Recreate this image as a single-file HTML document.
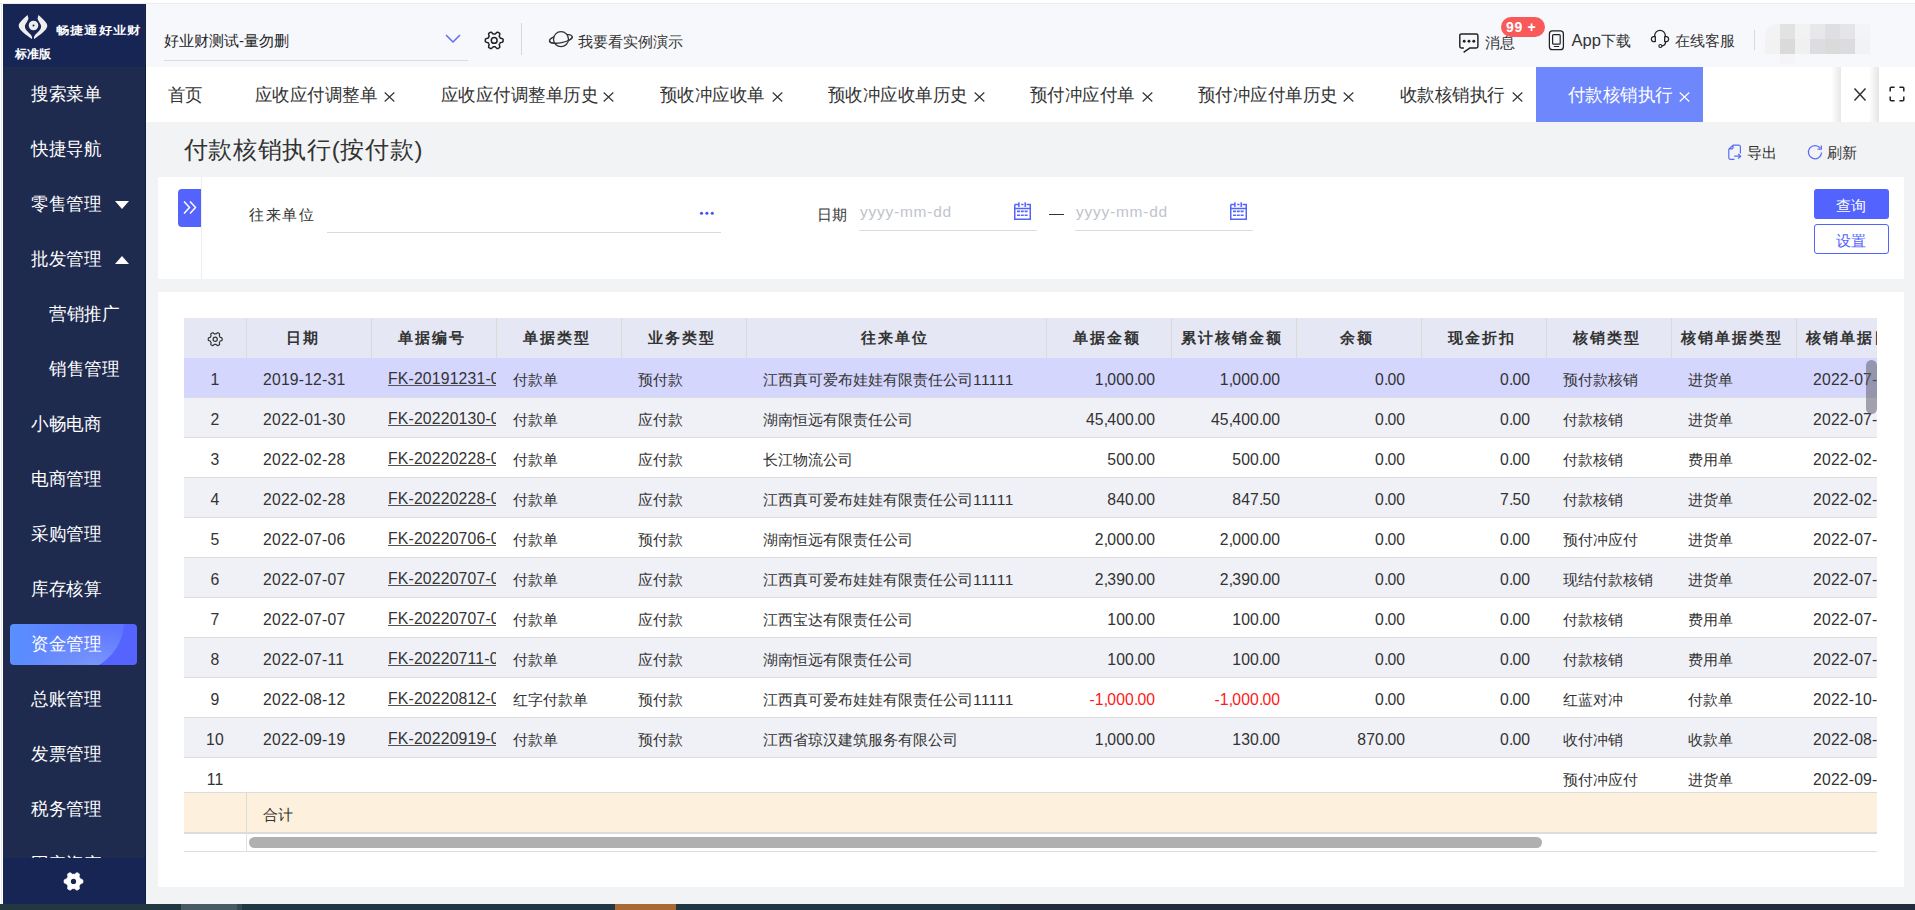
<!DOCTYPE html><html><head><meta charset="utf-8"><style>
*{margin:0;padding:0;box-sizing:border-box}
body{width:1915px;height:910px;position:relative;overflow:hidden;background:#fff;font-family:"Liberation Sans", sans-serif}
.t{position:absolute;white-space:nowrap}
svg{position:absolute;overflow:visible}
</style></head><body>
<div style="position:absolute;left:0px;top:3px;width:1915px;height:1px;background:#ececec"></div>
<div style="position:absolute;left:1px;top:3px;width:1px;height:901px;background:#e9e9e9"></div>
<div style="position:absolute;left:146px;top:4px;width:1769px;height:63px;background:#f7f8fc"></div>
<div class="t" style="left:164px;top:33px;font-size:15px;line-height:15px;color:#222;">好业财测试-量勿删</div>
<div style="position:absolute;left:164px;top:60px;width:304px;height:1px;background:#d9dbe0"></div>
<svg style="left:445px;top:34px" width="16" height="9" viewBox="0 0 16 9"><path d="M1 1 L8 8 L15 1" fill="none" stroke="#5b6cf5" stroke-width="1.5"/></svg>
<svg style="left:474px;top:20px" width="40" height="40" viewBox="0 0 40 40"><path d="M29.10 20.40 L29.09 20.79 L29.07 21.18 L29.02 21.56 L28.78 21.91 L28.21 22.17 L27.59 22.38 L26.97 22.54 L26.39 22.65 L26.11 22.85 L26.00 23.10 L25.88 23.36 L25.74 23.60 L25.60 23.84 L25.44 24.07 L25.28 24.30 L25.25 24.63 L25.43 25.20 L25.61 25.81 L25.74 26.45 L25.80 27.07 L25.62 27.46 L25.30 27.69 L24.98 27.91 L24.65 28.11 L24.31 28.29 L23.96 28.47 L23.61 28.62 L23.18 28.59 L22.67 28.22 L22.18 27.79 L21.74 27.33 L21.34 26.89 L21.04 26.75 L20.76 26.78 L20.48 26.79 L20.20 26.80 L19.92 26.79 L19.64 26.78 L19.36 26.75 L19.06 26.89 L18.66 27.33 L18.22 27.79 L17.73 28.22 L17.22 28.59 L16.79 28.62 L16.44 28.47 L16.09 28.29 L15.75 28.11 L15.42 27.91 L15.10 27.69 L14.78 27.46 L14.60 27.07 L14.66 26.45 L14.79 25.81 L14.97 25.20 L15.15 24.63 L15.12 24.30 L14.96 24.07 L14.80 23.84 L14.66 23.60 L14.52 23.36 L14.40 23.10 L14.29 22.85 L14.01 22.65 L13.43 22.54 L12.81 22.38 L12.19 22.17 L11.62 21.91 L11.38 21.56 L11.33 21.18 L11.31 20.79 L11.30 20.40 L11.31 20.01 L11.33 19.62 L11.38 19.24 L11.62 18.89 L12.19 18.63 L12.81 18.42 L13.43 18.26 L14.01 18.15 L14.29 17.95 L14.40 17.70 L14.52 17.44 L14.66 17.20 L14.80 16.96 L14.96 16.73 L15.12 16.50 L15.15 16.17 L14.97 15.60 L14.79 14.99 L14.66 14.35 L14.60 13.73 L14.78 13.34 L15.10 13.11 L15.42 12.89 L15.75 12.69 L16.09 12.51 L16.44 12.33 L16.79 12.18 L17.22 12.21 L17.73 12.58 L18.22 13.01 L18.66 13.47 L19.06 13.91 L19.36 14.05 L19.64 14.02 L19.92 14.01 L20.20 14.00 L20.48 14.01 L20.76 14.02 L21.04 14.05 L21.34 13.91 L21.74 13.47 L22.18 13.01 L22.67 12.58 L23.18 12.21 L23.61 12.18 L23.96 12.33 L24.31 12.51 L24.65 12.69 L24.98 12.89 L25.30 13.11 L25.62 13.34 L25.80 13.73 L25.74 14.35 L25.61 14.99 L25.43 15.60 L25.25 16.17 L25.28 16.50 L25.44 16.73 L25.60 16.96 L25.74 17.20 L25.88 17.44 L26.00 17.70 L26.11 17.95 L26.39 18.15 L26.97 18.26 L27.59 18.42 L28.21 18.63 L28.78 18.89 L29.02 19.24 L29.07 19.62 L29.09 20.01Z" fill="none" stroke="#222" stroke-width="1.5" stroke-linejoin="round"/><circle cx="20.2" cy="20.4" r="2.9" fill="none" stroke="#222" stroke-width="1.5"/></svg>
<div style="position:absolute;left:521px;top:23px;width:1px;height:32px;background:#d6d8de"></div>
<svg style="left:544px;top:26px" width="34" height="26" viewBox="0 0 34 26"><ellipse cx="16.9" cy="12.8" rx="11.6" ry="3.9" transform="rotate(-11 16.9 12.8)" fill="none" stroke="#333" stroke-width="1.3"/><circle cx="17" cy="13.2" r="7.5" fill="#f7f8fc" stroke="#333" stroke-width="1.3"/><path d="M5.51 15.01 A11.6 3.9 -11 0 0 28.29 10.59" fill="none" stroke="#333" stroke-width="1.3"/></svg>
<div class="t" style="left:578px;top:33.5px;font-size:15px;line-height:15px;color:#333;">我要看实例演示</div>
<svg style="left:1458px;top:32px" width="22" height="22" viewBox="0 0 22 22"><path d="M5.9 15.9H3.4a1.6 1.6 0 0 1-1.6-1.6V3.5a1.6 1.6 0 0 1 1.6-1.6h14.9a1.6 1.6 0 0 1 1.6 1.6v10.8a1.6 1.6 0 0 1-1.6 1.6H12L5.6 20.3" fill="none" stroke="#222" stroke-width="1.45" stroke-linejoin="round"/><circle cx="6.2" cy="9.3" r="1.45" fill="#222"/><circle cx="11" cy="9.3" r="1.45" fill="#222"/><circle cx="15.8" cy="9.3" r="1.45" fill="#222"/></svg>
<div class="t" style="left:1485px;top:35px;font-size:15px;line-height:15px;color:#333;">消息</div>
<div style="position:absolute;left:1501px;top:17px;width:44px;height:20px;background:#f85a5a;border-radius:10px"></div>
<div class="t" style="left:1506px;top:19px;font-size:14px;line-height:17px;color:#fff;font-weight:bold;letter-spacing:0.6px">99</div>
<div class="t" style="left:1527.5px;top:19px;font-size:14px;line-height:17px;color:#fff;font-weight:bold">+</div>
<svg style="left:1548px;top:30px" width="17" height="21" viewBox="0 0 17 21"><rect x="1.4" y="0.9" width="14" height="18.8" rx="3" fill="none" stroke="#222" stroke-width="1.25"/><rect x="4.6" y="4.6" width="7.6" height="9.6" rx="1" fill="none" stroke="#222" stroke-width="1.2"/><path d="M6.3 16.5h4.4" stroke="#222" stroke-width="1.2" stroke-linecap="round"/></svg>
<div class="t" style="left:1571.5px;top:32.5px;font-size:15px;line-height:15px;color:#333;"><span style="font-size:16.5px">App</span>下载</div>
<svg style="left:1646px;top:26px" width="28" height="26" viewBox="0 0 28 26"><path d="M8.7 10.6V9.6A5.3 5.3 0 0 1 19.3 9.6V10.6" fill="none" stroke="#222" stroke-width="1.3"/><path d="M9.3 10.7H7.4A2 2.4 0 0 0 5.4 13.1A2 2.4 0 0 0 7.4 15.6H9.3Z" fill="none" stroke="#222" stroke-width="1.3" stroke-linejoin="round"/><path d="M18.7 10.7H20.6A2 2.4 0 0 1 22.6 13.1A2 2.4 0 0 1 20.6 15.6H18.7Z" fill="none" stroke="#222" stroke-width="1.3" stroke-linejoin="round"/><path d="M19.6 15.8Q19.4 19.6 15.9 20" fill="none" stroke="#222" stroke-width="1.3"/><circle cx="14.4" cy="20" r="1.5" fill="none" stroke="#222" stroke-width="1.2"/></svg>
<div class="t" style="left:1675px;top:32.5px;font-size:15px;line-height:15px;color:#333;">在线客服</div>
<div style="position:absolute;left:1754px;top:30px;width:1px;height:20px;background:#d6d8de"></div>
<div style="position:absolute;left:1765px;top:24px;width:15px;height:15px;background:#f3f3f5;border-top-left-radius:12px"></div>
<div style="position:absolute;left:1780px;top:24px;width:15px;height:15px;background:#e2e2e2"></div>
<div style="position:absolute;left:1795px;top:24px;width:15px;height:15px;background:#f2f2f3"></div>
<div style="position:absolute;left:1810px;top:24px;width:15px;height:15px;background:#e8e8ea"></div>
<div style="position:absolute;left:1825px;top:24px;width:15px;height:15px;background:#dfdee2"></div>
<div style="position:absolute;left:1840px;top:24px;width:15px;height:15px;background:#e5e5e8"></div>
<div style="position:absolute;left:1855px;top:24px;width:15px;height:15px;background:#f3f4f7"></div>
<div style="position:absolute;left:1765px;top:39px;width:15px;height:15px;background:#f2f2f3"></div>
<div style="position:absolute;left:1780px;top:39px;width:15px;height:15px;background:#dadada"></div>
<div style="position:absolute;left:1795px;top:39px;width:15px;height:15px;background:#f0f0f1"></div>
<div style="position:absolute;left:1810px;top:39px;width:15px;height:15px;background:#dddce0"></div>
<div style="position:absolute;left:1825px;top:39px;width:15px;height:15px;background:#dadada"></div>
<div style="position:absolute;left:1840px;top:39px;width:15px;height:15px;background:#dcdce0"></div>
<div style="position:absolute;left:1855px;top:39px;width:15px;height:15px;background:#f1f2f6"></div>
<div style="position:absolute;left:1780px;top:54px;width:15px;height:10px;background:#f5f5f7"></div>
<div style="position:absolute;left:146px;top:67px;width:1769px;height:55px;background:#fff"></div>
<div class="t" style="left:167.5px;top:86px;font-size:18px;line-height:18px;color:#333;transform:scaleX(0.972);transform-origin:0 0">首页</div>
<div class="t" style="left:254.5px;top:86px;font-size:18px;line-height:18px;color:#333;transform:scaleX(0.972);transform-origin:0 0">应收应付调整单</div>
<svg style="left:384px;top:92px" width="11" height="10" viewBox="0 0 11 10"><path d="M0.7 0.5L10.3 9.5M10.3 0.5L0.7 9.5" stroke="#333" stroke-width="1.15"/></svg>
<div class="t" style="left:440.5px;top:86px;font-size:18px;line-height:18px;color:#333;transform:scaleX(0.972);transform-origin:0 0">应收应付调整单历史</div>
<svg style="left:603px;top:92px" width="11" height="10" viewBox="0 0 11 10"><path d="M0.7 0.5L10.3 9.5M10.3 0.5L0.7 9.5" stroke="#333" stroke-width="1.15"/></svg>
<div class="t" style="left:659.5px;top:86px;font-size:18px;line-height:18px;color:#333;transform:scaleX(0.972);transform-origin:0 0">预收冲应收单</div>
<svg style="left:771.6px;top:92px" width="11" height="10" viewBox="0 0 11 10"><path d="M0.7 0.5L10.3 9.5M10.3 0.5L0.7 9.5" stroke="#333" stroke-width="1.15"/></svg>
<div class="t" style="left:827.5px;top:86px;font-size:18px;line-height:18px;color:#333;transform:scaleX(0.972);transform-origin:0 0">预收冲应收单历史</div>
<svg style="left:973.7px;top:92px" width="11" height="10" viewBox="0 0 11 10"><path d="M0.7 0.5L10.3 9.5M10.3 0.5L0.7 9.5" stroke="#333" stroke-width="1.15"/></svg>
<div class="t" style="left:1029.5px;top:86px;font-size:18px;line-height:18px;color:#333;transform:scaleX(0.972);transform-origin:0 0">预付冲应付单</div>
<svg style="left:1142px;top:92px" width="11" height="10" viewBox="0 0 11 10"><path d="M0.7 0.5L10.3 9.5M10.3 0.5L0.7 9.5" stroke="#333" stroke-width="1.15"/></svg>
<div class="t" style="left:1197.5px;top:86px;font-size:18px;line-height:18px;color:#333;transform:scaleX(0.972);transform-origin:0 0">预付冲应付单历史</div>
<svg style="left:1343.4px;top:92px" width="11" height="10" viewBox="0 0 11 10"><path d="M0.7 0.5L10.3 9.5M10.3 0.5L0.7 9.5" stroke="#333" stroke-width="1.15"/></svg>
<div class="t" style="left:1400.0px;top:86px;font-size:18px;line-height:18px;color:#333;transform:scaleX(0.972);transform-origin:0 0">收款核销执行</div>
<svg style="left:1511.8px;top:92px" width="11" height="10" viewBox="0 0 11 10"><path d="M0.7 0.5L10.3 9.5M10.3 0.5L0.7 9.5" stroke="#333" stroke-width="1.15"/></svg>
<div style="position:absolute;left:1536px;top:67px;width:167px;height:55px;background:#6e87fc"></div>
<div class="t" style="left:1567.5px;top:86px;font-size:18px;line-height:18px;color:#fff;transform:scaleX(0.972);transform-origin:0 0">付款核销执行</div>
<svg style="left:1678.8px;top:92px" width="11" height="10" viewBox="0 0 11 10"><path d="M0.7 0.5L10.3 9.5M10.3 0.5L0.7 9.5" stroke="#fff" stroke-width="1.15"/></svg>
<div style="position:absolute;left:1831px;top:67px;width:10px;height:55px;background:linear-gradient(to right,rgba(0,0,0,0),rgba(0,0,0,0.09))"></div>
<div style="position:absolute;left:1841px;top:67px;width:28px;height:55px;background:#fff"></div>
<div style="position:absolute;left:1869px;top:67px;width:10px;height:55px;background:linear-gradient(to right,rgba(255,255,255,1),rgba(0,0,0,0.10))"></div>
<div style="position:absolute;left:1879px;top:67px;width:36px;height:55px;background:#fff"></div>
<svg style="left:1853px;top:87px" width="14" height="15" viewBox="0 0 14 15"><path d="M1.5 1.5L12.5 13.5M12.5 1.5L1.5 13.5" stroke="#333" stroke-width="1.5"/></svg>
<svg style="left:1889px;top:86px" width="16" height="16" viewBox="0 0 16 16"><path d="M1.2 5.5V2.2a1 1 0 0 1 1-1H5.6M10.4 1.2h3.4a1 1 0 0 1 1 1V5.5M14.8 10.5v3.3a1 1 0 0 1-1 1H10.4M5.6 14.8H2.2a1 1 0 0 1-1-1V10.5" fill="none" stroke="#222" stroke-width="1.5"/></svg>
<div style="position:absolute;left:146px;top:122px;width:1769px;height:782px;background:#f2f3f5"></div>
<div class="t" style="left:183.5px;top:136.5px;font-size:24px;line-height:25px;color:#333;letter-spacing:0.7px">付款核销执行(按付款)</div>
<svg style="left:1728px;top:144px" width="14" height="17" viewBox="0 0 14 17"><path d="M5 1.2h5.8a1.6 1.6 0 0 1 1.6 1.6v6.8M6.5 15.4H2.4a1.6 1.6 0 0 1-1.6-1.6V5.2L5 1.2v2.6a1 1 0 0 1-1 1H0.8" fill="none" stroke="#5b6cf5" stroke-width="1.2" stroke-linejoin="round"/><path d="M6.2 12.2h6.3M10.2 9.9l2.4 2.3-2.4 2.3" fill="none" stroke="#5b6cf5" stroke-width="1.3"/></svg>
<div class="t" style="left:1747px;top:145px;font-size:15px;line-height:15px;color:#333;">导出</div>
<svg style="left:1807px;top:144px" width="16" height="16" viewBox="0 0 16 16"><path d="M13.3 4.2A6.6 6.6 0 1 0 14.6 8.5" fill="none" stroke="#5b6cf5" stroke-width="1.25"/><path d="M14.3 1.5V5.2H10.6" fill="none" stroke="#5b6cf5" stroke-width="1.25"/></svg>
<div class="t" style="left:1827px;top:145px;font-size:15px;line-height:15px;color:#333;">刷新</div>
<div style="position:absolute;left:158px;top:177px;width:1746px;height:102px;background:#fff"></div>
<div style="position:absolute;left:201px;top:177px;width:1px;height:102px;background:#eceef2"></div>
<div style="position:absolute;left:178px;top:189px;width:23px;height:38px;background:#5563fe;border-radius:4px 0 0 4px"></div>
<svg style="left:183px;top:200px" width="14" height="15" viewBox="0 0 14 15"><path d="M1 1.5L6.5 7.5L1 13.5M7 1.5L12.5 7.5L7 13.5" fill="none" stroke="#fff" stroke-width="1.5"/></svg>
<div class="t" style="left:249px;top:207px;font-size:15px;line-height:15px;color:#333;letter-spacing:1.5px">往来单位</div>
<div style="position:absolute;left:327px;top:232px;width:394px;height:1px;background:#d9dbe0"></div>
<svg style="left:696px;top:208px" width="22" height="10" viewBox="0 0 22 10"><circle cx="5.5" cy="5.3" r="1.55" fill="#4552f8"/><circle cx="10.9" cy="5.3" r="1.55" fill="#4552f8"/><circle cx="16.3" cy="5.3" r="1.55" fill="#4552f8"/></svg>
<div class="t" style="left:816.5px;top:207px;font-size:15px;line-height:15px;color:#333;">日期</div>
<div class="t" style="left:860px;top:204px;font-size:15.5px;line-height:15px;color:#c0c4cc;letter-spacing:0.75px">yyyy-mm-dd</div>
<div style="position:absolute;left:859px;top:230px;width:178px;height:1px;background:#d9dbe0"></div>
<svg style="left:1014px;top:202px" width="17" height="18" viewBox="0 0 17 18"><path d="M0.75 2.6V17.25H16.25V2.6H12.5M9.5 2.6H7.2M4.3 2.6H0.75M0.75 6.5H16.25M4.9 0.3V5M11.2 0.3V5" fill="none" stroke="#5563fe" stroke-width="1.5"/><path d="M3 9.4h3M6.8 9.4h3M10.6 9.4h3M3 13.3h3M6.8 13.3h3M10.6 13.3h3" stroke="#5563fe" stroke-width="1.6"/></svg>
<div class="t" style="left:1076px;top:204px;font-size:15.5px;line-height:15px;color:#c0c4cc;letter-spacing:0.75px">yyyy-mm-dd</div>
<div style="position:absolute;left:1075px;top:230px;width:178px;height:1px;background:#d9dbe0"></div>
<svg style="left:1230px;top:202px" width="17" height="18" viewBox="0 0 17 18"><path d="M0.75 2.6V17.25H16.25V2.6H12.5M9.5 2.6H7.2M4.3 2.6H0.75M0.75 6.5H16.25M4.9 0.3V5M11.2 0.3V5" fill="none" stroke="#5563fe" stroke-width="1.5"/><path d="M3 9.4h3M6.8 9.4h3M10.6 9.4h3M3 13.3h3M6.8 13.3h3M10.6 13.3h3" stroke="#5563fe" stroke-width="1.6"/></svg>
<div style="position:absolute;left:1048.6px;top:214px;width:15.4px;height:1px;background:#333"></div>
<div style="position:absolute;left:1814px;top:189px;width:75px;height:30px;background:#5363fe;border-radius:3px"></div>
<div class="t" style="left:1836px;top:198px;font-size:15px;line-height:15px;color:#fff;">查询</div>
<div style="position:absolute;left:1814px;top:224px;width:75px;height:30px;background:#fff;border:1px solid #5363fe;border-radius:3px"></div>
<div class="t" style="left:1836px;top:233px;font-size:15px;line-height:15px;color:#5363fe;">设置</div>
<div style="position:absolute;left:158px;top:292px;width:1746px;height:595px;background:#fff"></div>
<div style="position:absolute;left:184px;top:318px;width:1693px;height:534px;overflow:hidden">
<div style="position:absolute;left:0px;top:0px;width:1693px;height:40px;background:#e5e8f4"></div>
<div style="position:absolute;left:62px;top:0px;width:1px;height:40px;background:#dadada"></div>
<div style="position:absolute;left:187px;top:0px;width:1px;height:40px;background:#dadada"></div>
<div style="position:absolute;left:312px;top:0px;width:1px;height:40px;background:#dadada"></div>
<div style="position:absolute;left:437px;top:0px;width:1px;height:40px;background:#dadada"></div>
<div style="position:absolute;left:562px;top:0px;width:1px;height:40px;background:#dadada"></div>
<div style="position:absolute;left:862px;top:0px;width:1px;height:40px;background:#dadada"></div>
<div style="position:absolute;left:987px;top:0px;width:1px;height:40px;background:#dadada"></div>
<div style="position:absolute;left:1112px;top:0px;width:1px;height:40px;background:#dadada"></div>
<div style="position:absolute;left:1237px;top:0px;width:1px;height:40px;background:#dadada"></div>
<div style="position:absolute;left:1362px;top:0px;width:1px;height:40px;background:#dadada"></div>
<div style="position:absolute;left:1487px;top:0px;width:1px;height:40px;background:#dadada"></div>
<div style="position:absolute;left:1612px;top:0px;width:1px;height:40px;background:#dadada"></div>
<div class="t" style="left:62px;width:125px;top:12px;font-size:15px;line-height:15px;font-weight:bold;color:#333;letter-spacing:2px;text-align:center;text-indent:-12px">日期</div>
<div class="t" style="left:187px;width:125px;top:12px;font-size:15px;line-height:15px;font-weight:bold;color:#333;letter-spacing:2px;text-align:center;text-indent:-3px">单据编号</div>
<div class="t" style="left:312px;width:125px;top:12px;font-size:15px;line-height:15px;font-weight:bold;color:#333;letter-spacing:2px;text-align:center;text-indent:-3px">单据类型</div>
<div class="t" style="left:437px;width:125px;top:12px;font-size:15px;line-height:15px;font-weight:bold;color:#333;letter-spacing:2px;text-align:center;text-indent:-3px">业务类型</div>
<div class="t" style="left:562px;width:300px;top:12px;font-size:15px;line-height:15px;font-weight:bold;color:#333;letter-spacing:2px;text-align:center;text-indent:-3px">往来单位</div>
<div class="t" style="left:862px;width:125px;top:12px;font-size:15px;line-height:15px;font-weight:bold;color:#333;letter-spacing:2px;text-align:center;text-indent:-3px">单据金额</div>
<div class="t" style="left:987px;width:125px;top:12px;font-size:15px;line-height:15px;font-weight:bold;color:#333;letter-spacing:2px;text-align:center;text-indent:-3px">累计核销金额</div>
<div class="t" style="left:1112px;width:125px;top:12px;font-size:15px;line-height:15px;font-weight:bold;color:#333;letter-spacing:2px;text-align:center;text-indent:-3px">余额</div>
<div class="t" style="left:1237px;width:125px;top:12px;font-size:15px;line-height:15px;font-weight:bold;color:#333;letter-spacing:2px;text-align:center;text-indent:-3px">现金折扣</div>
<div class="t" style="left:1362px;width:125px;top:12px;font-size:15px;line-height:15px;font-weight:bold;color:#333;letter-spacing:2px;text-align:center;text-indent:-3px">核销类型</div>
<div class="t" style="left:1487px;width:125px;top:12px;font-size:15px;line-height:15px;font-weight:bold;color:#333;letter-spacing:2px;text-align:center;text-indent:-3px">核销单据类型</div>
<div class="t" style="left:1612px;width:125px;top:12px;font-size:15px;line-height:15px;font-weight:bold;color:#333;letter-spacing:2px;text-align:center;text-indent:-3px">核销单据日期</div>
<svg style="left:11px;top:1px" width="40" height="40" viewBox="0 0 40 40"><path d="M27.15 20.20 L27.14 20.50 L27.12 20.81 L27.09 21.11 L26.92 21.38 L26.52 21.60 L26.09 21.78 L25.66 21.92 L25.25 22.04 L25.05 22.21 L24.96 22.42 L24.86 22.62 L24.75 22.82 L24.63 23.02 L24.50 23.21 L24.37 23.40 L24.32 23.66 L24.42 24.07 L24.51 24.51 L24.57 24.97 L24.59 25.43 L24.43 25.71 L24.19 25.89 L23.93 26.06 L23.68 26.22 L23.41 26.36 L23.14 26.50 L22.86 26.62 L22.53 26.61 L22.15 26.37 L21.78 26.09 L21.44 25.79 L21.13 25.50 L20.89 25.41 L20.66 25.43 L20.43 25.45 L20.20 25.45 L19.97 25.45 L19.74 25.43 L19.51 25.41 L19.27 25.50 L18.96 25.79 L18.62 26.09 L18.25 26.37 L17.87 26.61 L17.54 26.62 L17.26 26.50 L16.99 26.36 L16.73 26.22 L16.47 26.06 L16.21 25.89 L15.97 25.71 L15.81 25.43 L15.83 24.97 L15.89 24.51 L15.98 24.07 L16.08 23.66 L16.03 23.40 L15.90 23.21 L15.77 23.02 L15.65 22.83 L15.54 22.62 L15.44 22.42 L15.35 22.21 L15.15 22.04 L14.74 21.92 L14.31 21.78 L13.88 21.60 L13.48 21.38 L13.31 21.11 L13.28 20.81 L13.26 20.50 L13.25 20.20 L13.26 19.90 L13.28 19.59 L13.31 19.29 L13.48 19.02 L13.88 18.80 L14.31 18.62 L14.74 18.48 L15.15 18.36 L15.35 18.19 L15.44 17.98 L15.54 17.78 L15.65 17.57 L15.77 17.38 L15.90 17.19 L16.03 17.00 L16.08 16.74 L15.98 16.33 L15.89 15.89 L15.83 15.43 L15.81 14.97 L15.97 14.69 L16.21 14.51 L16.47 14.34 L16.72 14.18 L16.99 14.04 L17.26 13.90 L17.54 13.78 L17.87 13.79 L18.25 14.03 L18.62 14.31 L18.96 14.61 L19.27 14.90 L19.51 14.99 L19.74 14.97 L19.97 14.95 L20.20 14.95 L20.43 14.95 L20.66 14.97 L20.89 14.99 L21.13 14.90 L21.44 14.61 L21.78 14.31 L22.15 14.03 L22.53 13.79 L22.86 13.78 L23.14 13.90 L23.41 14.04 L23.67 14.18 L23.93 14.34 L24.19 14.51 L24.43 14.69 L24.59 14.97 L24.57 15.43 L24.51 15.89 L24.42 16.33 L24.32 16.74 L24.37 17.00 L24.50 17.19 L24.63 17.38 L24.75 17.58 L24.86 17.78 L24.96 17.98 L25.05 18.19 L25.25 18.36 L25.66 18.48 L26.09 18.62 L26.52 18.80 L26.92 19.02 L27.09 19.29 L27.12 19.59 L27.14 19.90Z" fill="none" stroke="#333" stroke-width="1.2" stroke-linejoin="round"/><circle cx="20.2" cy="20.2" r="2.1" fill="none" stroke="#333" stroke-width="1.2"/></svg>
<div style="position:absolute;left:0px;top:40px;width:1693px;height:40px;background:#d4d6fd"></div>
<div style="position:absolute;left:0px;top:79px;width:1693px;height:1px;background:#dedede"></div>
<div class="t" style="left:0;width:62px;top:54px;font-size:15.75px;line-height:15px;color:#333;text-align:center;letter-spacing:0.2px">1</div>
<div class="t" style="left:79px;top:54px;font-size:15.75px;letter-spacing:0.18px;line-height:15px;color:#333">2019-12-31</div>
<div class="t" style="left:204px;top:53px;font-size:15.75px;letter-spacing:0.18px;line-height:15px;color:#333;overflow:hidden;width:108px">FK-20191231-0</div>
<div style="position:absolute;left:204px;top:67px;width:108px;height:1px;background:#555"></div>
<div class="t" style="left:329px;top:54px;font-size:15px;line-height:15px;color:#333">付款单</div>
<div class="t" style="left:454px;top:54px;font-size:15px;line-height:15px;color:#333">预付款</div>
<div class="t" style="left:579px;top:54px;font-size:15px;line-height:15px;color:#333">江西真可爱布娃娃有限责任公司<span style="font-size:15.5px;letter-spacing:0.45px">11111</span></div>
<div class="t" style="left:862px;width:109.3px;top:54px;font-size:15.75px;letter-spacing:0.18px;line-height:15px;color:#333;text-align:right">1<span style="letter-spacing:-1px">,</span>000<span style="letter-spacing:-1px">.</span>00</div>
<div class="t" style="left:987px;width:109.3px;top:54px;font-size:15.75px;letter-spacing:0.18px;line-height:15px;color:#333;text-align:right">1<span style="letter-spacing:-1px">,</span>000<span style="letter-spacing:-1px">.</span>00</div>
<div class="t" style="left:1112px;width:109.3px;top:54px;font-size:15.75px;letter-spacing:0.18px;line-height:15px;color:#333;text-align:right">0<span style="letter-spacing:-1px">.</span>00</div>
<div class="t" style="left:1237px;width:109.3px;top:54px;font-size:15.75px;letter-spacing:0.18px;line-height:15px;color:#333;text-align:right">0<span style="letter-spacing:-1px">.</span>00</div>
<div class="t" style="left:1379px;top:54px;font-size:15px;line-height:15px;color:#333">预付款核销</div>
<div class="t" style="left:1504px;top:54px;font-size:15px;line-height:15px;color:#333">进货单</div>
<div class="t" style="left:1629px;top:54px;font-size:15.75px;letter-spacing:0.18px;line-height:15px;color:#333">2022-07-</div>
<div style="position:absolute;left:0px;top:80px;width:1693px;height:40px;background:#f0f1f6"></div>
<div style="position:absolute;left:0px;top:119px;width:1693px;height:1px;background:#dedede"></div>
<div class="t" style="left:0;width:62px;top:94px;font-size:15.75px;line-height:15px;color:#333;text-align:center;letter-spacing:0.2px">2</div>
<div class="t" style="left:79px;top:94px;font-size:15.75px;letter-spacing:0.18px;line-height:15px;color:#333">2022-01-30</div>
<div class="t" style="left:204px;top:93px;font-size:15.75px;letter-spacing:0.18px;line-height:15px;color:#333;overflow:hidden;width:108px">FK-20220130-0</div>
<div style="position:absolute;left:204px;top:107px;width:108px;height:1px;background:#555"></div>
<div class="t" style="left:329px;top:94px;font-size:15px;line-height:15px;color:#333">付款单</div>
<div class="t" style="left:454px;top:94px;font-size:15px;line-height:15px;color:#333">应付款</div>
<div class="t" style="left:579px;top:94px;font-size:15px;line-height:15px;color:#333">湖南恒远有限责任公司</div>
<div class="t" style="left:862px;width:109.3px;top:94px;font-size:15.75px;letter-spacing:0.18px;line-height:15px;color:#333;text-align:right">45<span style="letter-spacing:-1px">,</span>400<span style="letter-spacing:-1px">.</span>00</div>
<div class="t" style="left:987px;width:109.3px;top:94px;font-size:15.75px;letter-spacing:0.18px;line-height:15px;color:#333;text-align:right">45<span style="letter-spacing:-1px">,</span>400<span style="letter-spacing:-1px">.</span>00</div>
<div class="t" style="left:1112px;width:109.3px;top:94px;font-size:15.75px;letter-spacing:0.18px;line-height:15px;color:#333;text-align:right">0<span style="letter-spacing:-1px">.</span>00</div>
<div class="t" style="left:1237px;width:109.3px;top:94px;font-size:15.75px;letter-spacing:0.18px;line-height:15px;color:#333;text-align:right">0<span style="letter-spacing:-1px">.</span>00</div>
<div class="t" style="left:1379px;top:94px;font-size:15px;line-height:15px;color:#333">付款核销</div>
<div class="t" style="left:1504px;top:94px;font-size:15px;line-height:15px;color:#333">进货单</div>
<div class="t" style="left:1629px;top:94px;font-size:15.75px;letter-spacing:0.18px;line-height:15px;color:#333">2022-07-</div>
<div style="position:absolute;left:0px;top:120px;width:1693px;height:40px;background:#fff"></div>
<div style="position:absolute;left:0px;top:159px;width:1693px;height:1px;background:#dedede"></div>
<div class="t" style="left:0;width:62px;top:134px;font-size:15.75px;line-height:15px;color:#333;text-align:center;letter-spacing:0.2px">3</div>
<div class="t" style="left:79px;top:134px;font-size:15.75px;letter-spacing:0.18px;line-height:15px;color:#333">2022-02-28</div>
<div class="t" style="left:204px;top:133px;font-size:15.75px;letter-spacing:0.18px;line-height:15px;color:#333;overflow:hidden;width:108px">FK-20220228-0</div>
<div style="position:absolute;left:204px;top:147px;width:108px;height:1px;background:#555"></div>
<div class="t" style="left:329px;top:134px;font-size:15px;line-height:15px;color:#333">付款单</div>
<div class="t" style="left:454px;top:134px;font-size:15px;line-height:15px;color:#333">应付款</div>
<div class="t" style="left:579px;top:134px;font-size:15px;line-height:15px;color:#333">长江物流公司</div>
<div class="t" style="left:862px;width:109.3px;top:134px;font-size:15.75px;letter-spacing:0.18px;line-height:15px;color:#333;text-align:right">500<span style="letter-spacing:-1px">.</span>00</div>
<div class="t" style="left:987px;width:109.3px;top:134px;font-size:15.75px;letter-spacing:0.18px;line-height:15px;color:#333;text-align:right">500<span style="letter-spacing:-1px">.</span>00</div>
<div class="t" style="left:1112px;width:109.3px;top:134px;font-size:15.75px;letter-spacing:0.18px;line-height:15px;color:#333;text-align:right">0<span style="letter-spacing:-1px">.</span>00</div>
<div class="t" style="left:1237px;width:109.3px;top:134px;font-size:15.75px;letter-spacing:0.18px;line-height:15px;color:#333;text-align:right">0<span style="letter-spacing:-1px">.</span>00</div>
<div class="t" style="left:1379px;top:134px;font-size:15px;line-height:15px;color:#333">付款核销</div>
<div class="t" style="left:1504px;top:134px;font-size:15px;line-height:15px;color:#333">费用单</div>
<div class="t" style="left:1629px;top:134px;font-size:15.75px;letter-spacing:0.18px;line-height:15px;color:#333">2022-02-</div>
<div style="position:absolute;left:0px;top:160px;width:1693px;height:40px;background:#f0f1f6"></div>
<div style="position:absolute;left:0px;top:199px;width:1693px;height:1px;background:#dedede"></div>
<div class="t" style="left:0;width:62px;top:174px;font-size:15.75px;line-height:15px;color:#333;text-align:center;letter-spacing:0.2px">4</div>
<div class="t" style="left:79px;top:174px;font-size:15.75px;letter-spacing:0.18px;line-height:15px;color:#333">2022-02-28</div>
<div class="t" style="left:204px;top:173px;font-size:15.75px;letter-spacing:0.18px;line-height:15px;color:#333;overflow:hidden;width:108px">FK-20220228-0</div>
<div style="position:absolute;left:204px;top:187px;width:108px;height:1px;background:#555"></div>
<div class="t" style="left:329px;top:174px;font-size:15px;line-height:15px;color:#333">付款单</div>
<div class="t" style="left:454px;top:174px;font-size:15px;line-height:15px;color:#333">应付款</div>
<div class="t" style="left:579px;top:174px;font-size:15px;line-height:15px;color:#333">江西真可爱布娃娃有限责任公司<span style="font-size:15.5px;letter-spacing:0.45px">11111</span></div>
<div class="t" style="left:862px;width:109.3px;top:174px;font-size:15.75px;letter-spacing:0.18px;line-height:15px;color:#333;text-align:right">840<span style="letter-spacing:-1px">.</span>00</div>
<div class="t" style="left:987px;width:109.3px;top:174px;font-size:15.75px;letter-spacing:0.18px;line-height:15px;color:#333;text-align:right">847<span style="letter-spacing:-1px">.</span>50</div>
<div class="t" style="left:1112px;width:109.3px;top:174px;font-size:15.75px;letter-spacing:0.18px;line-height:15px;color:#333;text-align:right">0<span style="letter-spacing:-1px">.</span>00</div>
<div class="t" style="left:1237px;width:109.3px;top:174px;font-size:15.75px;letter-spacing:0.18px;line-height:15px;color:#333;text-align:right">7<span style="letter-spacing:-1px">.</span>50</div>
<div class="t" style="left:1379px;top:174px;font-size:15px;line-height:15px;color:#333">付款核销</div>
<div class="t" style="left:1504px;top:174px;font-size:15px;line-height:15px;color:#333">进货单</div>
<div class="t" style="left:1629px;top:174px;font-size:15.75px;letter-spacing:0.18px;line-height:15px;color:#333">2022-02-</div>
<div style="position:absolute;left:0px;top:200px;width:1693px;height:40px;background:#fff"></div>
<div style="position:absolute;left:0px;top:239px;width:1693px;height:1px;background:#dedede"></div>
<div class="t" style="left:0;width:62px;top:214px;font-size:15.75px;line-height:15px;color:#333;text-align:center;letter-spacing:0.2px">5</div>
<div class="t" style="left:79px;top:214px;font-size:15.75px;letter-spacing:0.18px;line-height:15px;color:#333">2022-07-06</div>
<div class="t" style="left:204px;top:213px;font-size:15.75px;letter-spacing:0.18px;line-height:15px;color:#333;overflow:hidden;width:108px">FK-20220706-0</div>
<div style="position:absolute;left:204px;top:227px;width:108px;height:1px;background:#555"></div>
<div class="t" style="left:329px;top:214px;font-size:15px;line-height:15px;color:#333">付款单</div>
<div class="t" style="left:454px;top:214px;font-size:15px;line-height:15px;color:#333">预付款</div>
<div class="t" style="left:579px;top:214px;font-size:15px;line-height:15px;color:#333">湖南恒远有限责任公司</div>
<div class="t" style="left:862px;width:109.3px;top:214px;font-size:15.75px;letter-spacing:0.18px;line-height:15px;color:#333;text-align:right">2<span style="letter-spacing:-1px">,</span>000<span style="letter-spacing:-1px">.</span>00</div>
<div class="t" style="left:987px;width:109.3px;top:214px;font-size:15.75px;letter-spacing:0.18px;line-height:15px;color:#333;text-align:right">2<span style="letter-spacing:-1px">,</span>000<span style="letter-spacing:-1px">.</span>00</div>
<div class="t" style="left:1112px;width:109.3px;top:214px;font-size:15.75px;letter-spacing:0.18px;line-height:15px;color:#333;text-align:right">0<span style="letter-spacing:-1px">.</span>00</div>
<div class="t" style="left:1237px;width:109.3px;top:214px;font-size:15.75px;letter-spacing:0.18px;line-height:15px;color:#333;text-align:right">0<span style="letter-spacing:-1px">.</span>00</div>
<div class="t" style="left:1379px;top:214px;font-size:15px;line-height:15px;color:#333">预付冲应付</div>
<div class="t" style="left:1504px;top:214px;font-size:15px;line-height:15px;color:#333">进货单</div>
<div class="t" style="left:1629px;top:214px;font-size:15.75px;letter-spacing:0.18px;line-height:15px;color:#333">2022-07-</div>
<div style="position:absolute;left:0px;top:240px;width:1693px;height:40px;background:#f0f1f6"></div>
<div style="position:absolute;left:0px;top:279px;width:1693px;height:1px;background:#dedede"></div>
<div class="t" style="left:0;width:62px;top:254px;font-size:15.75px;line-height:15px;color:#333;text-align:center;letter-spacing:0.2px">6</div>
<div class="t" style="left:79px;top:254px;font-size:15.75px;letter-spacing:0.18px;line-height:15px;color:#333">2022-07-07</div>
<div class="t" style="left:204px;top:253px;font-size:15.75px;letter-spacing:0.18px;line-height:15px;color:#333;overflow:hidden;width:108px">FK-20220707-0</div>
<div style="position:absolute;left:204px;top:267px;width:108px;height:1px;background:#555"></div>
<div class="t" style="left:329px;top:254px;font-size:15px;line-height:15px;color:#333">付款单</div>
<div class="t" style="left:454px;top:254px;font-size:15px;line-height:15px;color:#333">应付款</div>
<div class="t" style="left:579px;top:254px;font-size:15px;line-height:15px;color:#333">江西真可爱布娃娃有限责任公司<span style="font-size:15.5px;letter-spacing:0.45px">11111</span></div>
<div class="t" style="left:862px;width:109.3px;top:254px;font-size:15.75px;letter-spacing:0.18px;line-height:15px;color:#333;text-align:right">2<span style="letter-spacing:-1px">,</span>390<span style="letter-spacing:-1px">.</span>00</div>
<div class="t" style="left:987px;width:109.3px;top:254px;font-size:15.75px;letter-spacing:0.18px;line-height:15px;color:#333;text-align:right">2<span style="letter-spacing:-1px">,</span>390<span style="letter-spacing:-1px">.</span>00</div>
<div class="t" style="left:1112px;width:109.3px;top:254px;font-size:15.75px;letter-spacing:0.18px;line-height:15px;color:#333;text-align:right">0<span style="letter-spacing:-1px">.</span>00</div>
<div class="t" style="left:1237px;width:109.3px;top:254px;font-size:15.75px;letter-spacing:0.18px;line-height:15px;color:#333;text-align:right">0<span style="letter-spacing:-1px">.</span>00</div>
<div class="t" style="left:1379px;top:254px;font-size:15px;line-height:15px;color:#333">现结付款核销</div>
<div class="t" style="left:1504px;top:254px;font-size:15px;line-height:15px;color:#333">进货单</div>
<div class="t" style="left:1629px;top:254px;font-size:15.75px;letter-spacing:0.18px;line-height:15px;color:#333">2022-07-</div>
<div style="position:absolute;left:0px;top:280px;width:1693px;height:40px;background:#fff"></div>
<div style="position:absolute;left:0px;top:319px;width:1693px;height:1px;background:#dedede"></div>
<div class="t" style="left:0;width:62px;top:294px;font-size:15.75px;line-height:15px;color:#333;text-align:center;letter-spacing:0.2px">7</div>
<div class="t" style="left:79px;top:294px;font-size:15.75px;letter-spacing:0.18px;line-height:15px;color:#333">2022-07-07</div>
<div class="t" style="left:204px;top:293px;font-size:15.75px;letter-spacing:0.18px;line-height:15px;color:#333;overflow:hidden;width:108px">FK-20220707-0</div>
<div style="position:absolute;left:204px;top:307px;width:108px;height:1px;background:#555"></div>
<div class="t" style="left:329px;top:294px;font-size:15px;line-height:15px;color:#333">付款单</div>
<div class="t" style="left:454px;top:294px;font-size:15px;line-height:15px;color:#333">应付款</div>
<div class="t" style="left:579px;top:294px;font-size:15px;line-height:15px;color:#333">江西宝达有限责任公司</div>
<div class="t" style="left:862px;width:109.3px;top:294px;font-size:15.75px;letter-spacing:0.18px;line-height:15px;color:#333;text-align:right">100<span style="letter-spacing:-1px">.</span>00</div>
<div class="t" style="left:987px;width:109.3px;top:294px;font-size:15.75px;letter-spacing:0.18px;line-height:15px;color:#333;text-align:right">100<span style="letter-spacing:-1px">.</span>00</div>
<div class="t" style="left:1112px;width:109.3px;top:294px;font-size:15.75px;letter-spacing:0.18px;line-height:15px;color:#333;text-align:right">0<span style="letter-spacing:-1px">.</span>00</div>
<div class="t" style="left:1237px;width:109.3px;top:294px;font-size:15.75px;letter-spacing:0.18px;line-height:15px;color:#333;text-align:right">0<span style="letter-spacing:-1px">.</span>00</div>
<div class="t" style="left:1379px;top:294px;font-size:15px;line-height:15px;color:#333">付款核销</div>
<div class="t" style="left:1504px;top:294px;font-size:15px;line-height:15px;color:#333">费用单</div>
<div class="t" style="left:1629px;top:294px;font-size:15.75px;letter-spacing:0.18px;line-height:15px;color:#333">2022-07-</div>
<div style="position:absolute;left:0px;top:320px;width:1693px;height:40px;background:#f0f1f6"></div>
<div style="position:absolute;left:0px;top:359px;width:1693px;height:1px;background:#dedede"></div>
<div class="t" style="left:0;width:62px;top:334px;font-size:15.75px;line-height:15px;color:#333;text-align:center;letter-spacing:0.2px">8</div>
<div class="t" style="left:79px;top:334px;font-size:15.75px;letter-spacing:0.18px;line-height:15px;color:#333">2022-07-11</div>
<div class="t" style="left:204px;top:333px;font-size:15.75px;letter-spacing:0.18px;line-height:15px;color:#333;overflow:hidden;width:108px">FK-20220711-0</div>
<div style="position:absolute;left:204px;top:347px;width:108px;height:1px;background:#555"></div>
<div class="t" style="left:329px;top:334px;font-size:15px;line-height:15px;color:#333">付款单</div>
<div class="t" style="left:454px;top:334px;font-size:15px;line-height:15px;color:#333">应付款</div>
<div class="t" style="left:579px;top:334px;font-size:15px;line-height:15px;color:#333">湖南恒远有限责任公司</div>
<div class="t" style="left:862px;width:109.3px;top:334px;font-size:15.75px;letter-spacing:0.18px;line-height:15px;color:#333;text-align:right">100<span style="letter-spacing:-1px">.</span>00</div>
<div class="t" style="left:987px;width:109.3px;top:334px;font-size:15.75px;letter-spacing:0.18px;line-height:15px;color:#333;text-align:right">100<span style="letter-spacing:-1px">.</span>00</div>
<div class="t" style="left:1112px;width:109.3px;top:334px;font-size:15.75px;letter-spacing:0.18px;line-height:15px;color:#333;text-align:right">0<span style="letter-spacing:-1px">.</span>00</div>
<div class="t" style="left:1237px;width:109.3px;top:334px;font-size:15.75px;letter-spacing:0.18px;line-height:15px;color:#333;text-align:right">0<span style="letter-spacing:-1px">.</span>00</div>
<div class="t" style="left:1379px;top:334px;font-size:15px;line-height:15px;color:#333">付款核销</div>
<div class="t" style="left:1504px;top:334px;font-size:15px;line-height:15px;color:#333">费用单</div>
<div class="t" style="left:1629px;top:334px;font-size:15.75px;letter-spacing:0.18px;line-height:15px;color:#333">2022-07-</div>
<div style="position:absolute;left:0px;top:360px;width:1693px;height:40px;background:#fff"></div>
<div style="position:absolute;left:0px;top:399px;width:1693px;height:1px;background:#dedede"></div>
<div class="t" style="left:0;width:62px;top:374px;font-size:15.75px;line-height:15px;color:#333;text-align:center;letter-spacing:0.2px">9</div>
<div class="t" style="left:79px;top:374px;font-size:15.75px;letter-spacing:0.18px;line-height:15px;color:#333">2022-08-12</div>
<div class="t" style="left:204px;top:373px;font-size:15.75px;letter-spacing:0.18px;line-height:15px;color:#333;overflow:hidden;width:108px">FK-20220812-0</div>
<div style="position:absolute;left:204px;top:387px;width:108px;height:1px;background:#555"></div>
<div class="t" style="left:329px;top:374px;font-size:15px;line-height:15px;color:#333">红字付款单</div>
<div class="t" style="left:454px;top:374px;font-size:15px;line-height:15px;color:#333">预付款</div>
<div class="t" style="left:579px;top:374px;font-size:15px;line-height:15px;color:#333">江西真可爱布娃娃有限责任公司<span style="font-size:15.5px;letter-spacing:0.45px">11111</span></div>
<div class="t" style="left:862px;width:109.3px;top:374px;font-size:15.75px;letter-spacing:0.18px;line-height:15px;color:#ff1a1a;text-align:right">-1<span style="letter-spacing:-1px">,</span>000<span style="letter-spacing:-1px">.</span>00</div>
<div class="t" style="left:987px;width:109.3px;top:374px;font-size:15.75px;letter-spacing:0.18px;line-height:15px;color:#ff1a1a;text-align:right">-1<span style="letter-spacing:-1px">,</span>000<span style="letter-spacing:-1px">.</span>00</div>
<div class="t" style="left:1112px;width:109.3px;top:374px;font-size:15.75px;letter-spacing:0.18px;line-height:15px;color:#333;text-align:right">0<span style="letter-spacing:-1px">.</span>00</div>
<div class="t" style="left:1237px;width:109.3px;top:374px;font-size:15.75px;letter-spacing:0.18px;line-height:15px;color:#333;text-align:right">0<span style="letter-spacing:-1px">.</span>00</div>
<div class="t" style="left:1379px;top:374px;font-size:15px;line-height:15px;color:#333">红蓝对冲</div>
<div class="t" style="left:1504px;top:374px;font-size:15px;line-height:15px;color:#333">付款单</div>
<div class="t" style="left:1629px;top:374px;font-size:15.75px;letter-spacing:0.18px;line-height:15px;color:#333">2022-10-</div>
<div style="position:absolute;left:0px;top:400px;width:1693px;height:40px;background:#f0f1f6"></div>
<div style="position:absolute;left:0px;top:439px;width:1693px;height:1px;background:#dedede"></div>
<div class="t" style="left:0;width:62px;top:414px;font-size:15.75px;line-height:15px;color:#333;text-align:center;letter-spacing:0.2px">10</div>
<div class="t" style="left:79px;top:414px;font-size:15.75px;letter-spacing:0.18px;line-height:15px;color:#333">2022-09-19</div>
<div class="t" style="left:204px;top:413px;font-size:15.75px;letter-spacing:0.18px;line-height:15px;color:#333;overflow:hidden;width:108px">FK-20220919-0</div>
<div style="position:absolute;left:204px;top:427px;width:108px;height:1px;background:#555"></div>
<div class="t" style="left:329px;top:414px;font-size:15px;line-height:15px;color:#333">付款单</div>
<div class="t" style="left:454px;top:414px;font-size:15px;line-height:15px;color:#333">预付款</div>
<div class="t" style="left:579px;top:414px;font-size:15px;line-height:15px;color:#333">江西省琼汉建筑服务有限公司</div>
<div class="t" style="left:862px;width:109.3px;top:414px;font-size:15.75px;letter-spacing:0.18px;line-height:15px;color:#333;text-align:right">1<span style="letter-spacing:-1px">,</span>000<span style="letter-spacing:-1px">.</span>00</div>
<div class="t" style="left:987px;width:109.3px;top:414px;font-size:15.75px;letter-spacing:0.18px;line-height:15px;color:#333;text-align:right">130<span style="letter-spacing:-1px">.</span>00</div>
<div class="t" style="left:1112px;width:109.3px;top:414px;font-size:15.75px;letter-spacing:0.18px;line-height:15px;color:#333;text-align:right">870<span style="letter-spacing:-1px">.</span>00</div>
<div class="t" style="left:1237px;width:109.3px;top:414px;font-size:15.75px;letter-spacing:0.18px;line-height:15px;color:#333;text-align:right">0<span style="letter-spacing:-1px">.</span>00</div>
<div class="t" style="left:1379px;top:414px;font-size:15px;line-height:15px;color:#333">收付冲销</div>
<div class="t" style="left:1504px;top:414px;font-size:15px;line-height:15px;color:#333">收款单</div>
<div class="t" style="left:1629px;top:414px;font-size:15.75px;letter-spacing:0.18px;line-height:15px;color:#333">2022-08-</div>
<div style="position:absolute;left:0px;top:440px;width:1693px;height:40px;background:#fff"></div>
<div style="position:absolute;left:0px;top:479px;width:1693px;height:1px;background:#dedede"></div>
<div class="t" style="left:0;width:62px;top:454px;font-size:15.75px;line-height:15px;color:#333;text-align:center;letter-spacing:0.2px">11</div>
<div class="t" style="left:1379px;top:454px;font-size:15px;line-height:15px;color:#333">预付冲应付</div>
<div class="t" style="left:1504px;top:454px;font-size:15px;line-height:15px;color:#333">进货单</div>
<div class="t" style="left:1629px;top:454px;font-size:15.75px;letter-spacing:0.18px;line-height:15px;color:#333">2022-09-</div>
<div style="position:absolute;left:0px;top:475px;width:1693px;height:40px;background:#fdf0dc"></div>
<div style="position:absolute;left:0px;top:474px;width:1693px;height:1px;background:#dcdcdc"></div>
<div style="position:absolute;left:62px;top:475px;width:1px;height:39px;background:#dcdcdc"></div>
<div style="position:absolute;left:0px;top:514px;width:1693px;height:2px;background:#dcdcdc"></div>
<div class="t" style="left:79px;top:489px;font-size:15px;line-height:15px;color:#333">合计</div>
<div style="position:absolute;left:0px;top:516px;width:1693px;height:17px;background:#fff"></div>
<div style="position:absolute;left:62px;top:516px;width:1px;height:17px;background:#e0e0e0"></div>
<div style="position:absolute;left:0px;top:533px;width:1693px;height:1px;background:#dedede"></div>
<div style="position:absolute;left:65px;top:519px;width:1293px;height:11px;background:#b0b0b0;border-radius:6px"></div>
<div style="position:absolute;left:1682px;top:42px;width:11px;height:54px;background:rgba(96,96,110,0.55);border-radius:6px"></div>
</div>
<div style="position:absolute;left:3px;top:4px;width:143px;height:900px;background:#1e2a4e"></div>
<div style="position:absolute;left:3px;top:4px;width:141px;height:63px;background:#162554"></div>
<div style="position:absolute;left:145px;top:4px;width:1px;height:900px;background:#0f1d40"></div>
<svg style="left:18px;top:14px" width="32" height="26" viewBox="0 0 32 26"><path d="M9.5 1 C5 5, 0.5 9, 0.7 12 C1 16, 8 21, 14 25 C14.5 23, 13.5 21, 11 19 C7.5 16, 6.5 13.5, 7 11.5 C7.5 9.5, 10 7, 10.5 4.5 Z" fill="#eee"/><path d="M20.5 1 C25 5, 29.5 9, 29.3 12 C29 16, 22 21, 16 25 C15.5 23, 16.5 21, 19 19 C22.5 16, 23.5 13.5, 23 11.5 C22.5 9.5, 20 7, 19.5 4.5 Z" fill="#eee"/><circle cx="15.5" cy="11.5" r="4.8" fill="#eee"/><circle cx="15.5" cy="11.5" r="1" fill="#162554"/></svg>
<div class="t" style="left:55.5px;top:23.5px;font-size:13px;line-height:14px;color:#fff;font-weight:bold;letter-spacing:1.4px;transform:scaleY(0.82);transform-origin:0 7px">畅捷通好业财</div>
<div class="t" style="left:15px;top:47px;font-size:12px;line-height:14px;color:#fff;font-weight:bold">标准版</div>
<div style="position:absolute;left:10px;top:624px;width:127px;height:41px;background:radial-gradient(circle at 0px -3px, rgba(85,100,255,0) 50.6px, #5564ff 51.4px) 63px 0/64px 41px no-repeat, radial-gradient(ellipse 75px 42px at 85px 44px, #7b99fb 0%, rgba(123,153,251,0) 100%), linear-gradient(90deg, #5a90ff 0%, #5c80fe 40%, #5c74fe 75%);border-radius:4px"></div>
<div class="t" style="left:30.5px;top:85px;font-size:18px;line-height:18px;color:#fff;transform:scaleX(0.975);transform-origin:0 0">搜索菜单</div>
<div class="t" style="left:30.5px;top:140px;font-size:18px;line-height:18px;color:#fff;transform:scaleX(0.975);transform-origin:0 0">快捷导航</div>
<div class="t" style="left:30.5px;top:195px;font-size:18px;line-height:18px;color:#fff;transform:scaleX(0.975);transform-origin:0 0">零售管理</div>
<div class="t" style="left:30.5px;top:250px;font-size:18px;line-height:18px;color:#fff;transform:scaleX(0.975);transform-origin:0 0">批发管理</div>
<div class="t" style="left:48.5px;top:305px;font-size:18px;line-height:18px;color:#fff;transform:scaleX(0.975);transform-origin:0 0">营销推广</div>
<div class="t" style="left:48.5px;top:360px;font-size:18px;line-height:18px;color:#fff;transform:scaleX(0.975);transform-origin:0 0">销售管理</div>
<div class="t" style="left:30.5px;top:415px;font-size:18px;line-height:18px;color:#fff;transform:scaleX(0.975);transform-origin:0 0">小畅电商</div>
<div class="t" style="left:30.5px;top:470px;font-size:18px;line-height:18px;color:#fff;transform:scaleX(0.975);transform-origin:0 0">电商管理</div>
<div class="t" style="left:30.5px;top:525px;font-size:18px;line-height:18px;color:#fff;transform:scaleX(0.975);transform-origin:0 0">采购管理</div>
<div class="t" style="left:30.5px;top:580px;font-size:18px;line-height:18px;color:#fff;transform:scaleX(0.975);transform-origin:0 0">库存核算</div>
<div class="t" style="left:30.5px;top:635px;font-size:18px;line-height:18px;color:#fff;transform:scaleX(0.975);transform-origin:0 0">资金管理</div>
<div class="t" style="left:30.5px;top:690px;font-size:18px;line-height:18px;color:#fff;transform:scaleX(0.975);transform-origin:0 0">总账管理</div>
<div class="t" style="left:30.5px;top:745px;font-size:18px;line-height:18px;color:#fff;transform:scaleX(0.975);transform-origin:0 0">发票管理</div>
<div class="t" style="left:30.5px;top:800px;font-size:18px;line-height:18px;color:#fff;transform:scaleX(0.975);transform-origin:0 0">税务管理</div>
<div class="t" style="left:30.5px;top:855px;font-size:18px;line-height:18px;color:#fff;transform:scaleX(0.975);transform-origin:0 0">固定资产</div>
<svg style="left:115px;top:201px" width="14" height="8" viewBox="0 0 14 8"><path d="M0 0H14L7 8Z" fill="#fff"/></svg>
<svg style="left:115px;top:256px" width="14" height="8" viewBox="0 0 14 8"><path d="M0 8H14L7 0Z" fill="#fff"/></svg>
<div style="position:absolute;left:3px;top:858px;width:142px;height:46px;background:#162554"></div>
<svg style="left:53px;top:861px" width="40" height="40" viewBox="0 0 40 40"><path d="M30.00 20.40 L29.99 20.81 L29.96 21.23 L29.92 21.64 L29.69 22.02 L29.17 22.32 L28.61 22.57 L28.05 22.78 L27.51 22.95 L27.24 23.19 L27.12 23.49 L26.98 23.77 L26.82 24.05 L26.66 24.32 L26.48 24.59 L26.29 24.84 L26.22 25.20 L26.34 25.75 L26.44 26.34 L26.50 26.95 L26.50 27.55 L26.28 27.94 L25.95 28.18 L25.60 28.41 L25.25 28.63 L24.89 28.83 L24.51 29.01 L24.14 29.18 L23.69 29.17 L23.17 28.87 L22.67 28.51 L22.21 28.13 L21.80 27.75 L21.45 27.64 L21.14 27.67 L20.82 27.69 L20.50 27.70 L20.18 27.69 L19.86 27.67 L19.55 27.64 L19.20 27.75 L18.79 28.13 L18.33 28.51 L17.83 28.87 L17.31 29.17 L16.86 29.18 L16.49 29.01 L16.11 28.83 L15.75 28.63 L15.40 28.41 L15.05 28.18 L14.72 27.94 L14.50 27.55 L14.50 26.95 L14.56 26.34 L14.66 25.75 L14.78 25.20 L14.71 24.84 L14.52 24.59 L14.34 24.32 L14.18 24.05 L14.02 23.77 L13.88 23.49 L13.76 23.19 L13.49 22.95 L12.95 22.78 L12.39 22.57 L11.83 22.32 L11.31 22.02 L11.08 21.64 L11.04 21.23 L11.01 20.81 L11.00 20.40 L11.01 19.99 L11.04 19.57 L11.08 19.16 L11.31 18.78 L11.83 18.48 L12.39 18.23 L12.95 18.02 L13.49 17.85 L13.76 17.61 L13.88 17.31 L14.02 17.03 L14.18 16.75 L14.34 16.48 L14.52 16.21 L14.71 15.96 L14.78 15.60 L14.66 15.05 L14.56 14.46 L14.50 13.85 L14.50 13.25 L14.72 12.86 L15.05 12.62 L15.40 12.39 L15.75 12.17 L16.11 11.97 L16.49 11.79 L16.86 11.62 L17.31 11.63 L17.83 11.93 L18.33 12.29 L18.79 12.67 L19.20 13.05 L19.55 13.16 L19.86 13.13 L20.18 13.11 L20.50 13.10 L20.82 13.11 L21.14 13.13 L21.45 13.16 L21.80 13.05 L22.21 12.67 L22.67 12.29 L23.17 11.93 L23.69 11.63 L24.14 11.62 L24.51 11.79 L24.89 11.97 L25.25 12.17 L25.60 12.39 L25.95 12.62 L26.28 12.86 L26.50 13.25 L26.50 13.85 L26.44 14.46 L26.34 15.05 L26.22 15.60 L26.29 15.96 L26.48 16.21 L26.66 16.48 L26.82 16.75 L26.98 17.03 L27.12 17.31 L27.24 17.61 L27.51 17.85 L28.05 18.02 L28.61 18.23 L29.17 18.48 L29.69 18.78 L29.92 19.16 L29.96 19.57 L29.99 19.99Z" fill="#fff" stroke="#fff" stroke-width="0.6" stroke-linejoin="round"/><circle cx="20.5" cy="20.4" r="2.6" fill="#162554"/></svg>
<div style="position:absolute;left:0px;top:904px;width:1915px;height:6px;background:#213843"></div>
<div style="position:absolute;left:181px;top:904px;width:56px;height:6px;background:#4a5a62"></div>
<div style="position:absolute;left:237px;top:904px;width:5px;height:6px;background:#37474f"></div>
<div style="position:absolute;left:615px;top:904px;width:61px;height:6px;background:#a86a32"></div>
<div style="position:absolute;left:1000px;top:904px;width:915px;height:6px;background:#1f2d3c"></div>
</body></html>
